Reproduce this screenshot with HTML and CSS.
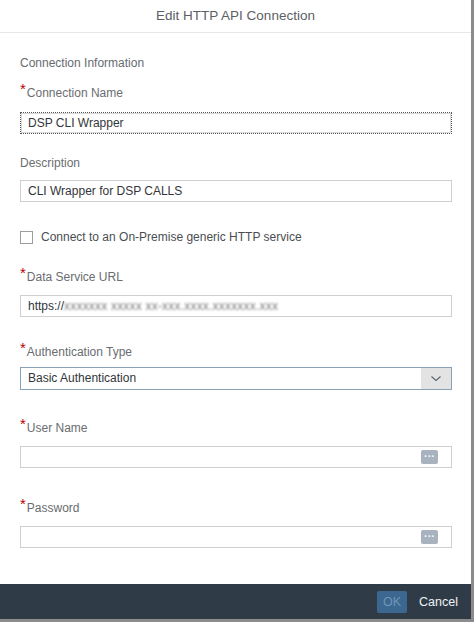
FILE: index.html
```html
<!DOCTYPE html>
<html lang="en">
  <head>
    <meta charset="UTF-8" />
    <title>Edit HTTP API Connection</title>
    <link rel="stylesheet" href="styles.css">
  </head>

  <body>
    <div id="dialog">
      <div id="header">Edit HTTP API Connection</div>

      <div id="content">
        <div class="section-title">Connection Information</div>

        <div class="field field-first">
          <label class="label"><span class="req">*</span>Connection Name</label>
          <div class="input focused">DSP CLI Wrapper</div>
        </div>

        <div class="field field-desc">
          <label class="label">Description</label>
          <div class="input">CLI Wrapper for DSP CALLS</div>
        </div>

        <div class="check-row">
          <span class="checkbox"></span>
          <span>Connect to an On-Premise generic HTTP service</span>
        </div>

        <div class="field field-url">
          <label class="label"><span class="req">*</span>Data Service URL</label>
          <div class="input">https://<span class="blurred">xxxxxxx xxxxx xx-xxx.xxxx.xxxxxxx.xxx</span></div>
        </div>

        <div class="field field-auth">
          <label class="label"><span class="req">*</span>Authentication Type</label>
          <div class="select">
            <span class="select-text">Basic Authentication</span>
            <span class="select-arrow">
              <svg width="12" height="8" viewBox="0 0 12 8">
                <path d="M1.5 1.5 L6 5.5 L10.5 1.5" fill="none" stroke="#5b6670" stroke-width="1.1" />
              </svg>
            </span>
          </div>
        </div>

        <div class="field field-user">
          <label class="label"><span class="req">*</span>User Name</label>
          <div class="input with-help"><span class="help">···</span></div>
        </div>

        <div class="field field-pass">
          <label class="label"><span class="req">*</span>Password</label>
          <div class="input with-help"><span class="help">···</span></div>
        </div>
      </div>

      <div id="footer">
        <button class="btn btn-ok">OK</button>
        <button class="btn btn-cancel">Cancel</button>
      </div>
    </div>
  </body>
</html>
```

FILE: styles.css
```css
body {
  margin: 0;
  padding: 0;
  background-color: #8c8c8c;
  font-family: "Liberation Sans", Arial, sans-serif;
  width: 474px;
  height: 622px;
  overflow: hidden;
}

#dialog {
  width: 471px;
  height: 619px;
  background-color: #fff;
  display: flex;
  flex-direction: column;
}

#header {
  height: 32px;
  line-height: 31px;
  text-align: center;
  font-size: 13.5px;
  color: #5b5f63;
  border-bottom: 1px solid #e8e8e8;
  flex-shrink: 0;
}

#content {
  flex: 1;
  padding: 22px 19px 0 20px;
  display: flex;
  flex-direction: column;
}

.section-title {
  font-size: 12px;
  line-height: 16px;
  color: #666b70;
  margin-bottom: 14px;
}

.field {
  display: flex;
  flex-direction: column;
}

.label {
  display: block;
  height: 16px;
  font-size: 12px;
  line-height: 16px;
  color: #6a6d70;
  margin-bottom: 10px;
}

.req {
  color: #bb0000;
  font-size: 15px;
  line-height: 0;
  vertical-align: 3px;
  margin-right: 1px;
}

.field-first .label { margin-bottom: 11px; }
.field-desc { margin-top: 21px; }
.field-desc .label { margin-bottom: 9px; }
.field-url { margin-top: 24px; }
.field-auth { margin-top: 27px; }
.field-auth .label { margin-bottom: 7px; }
.field-user { margin-top: 30px; }
.field-pass { margin-top: 32px; }

.input {
  height: 22px;
  box-sizing: border-box;
  border: 1px solid #cfcfcf;
  padding: 0 7px;
  font-size: 12px;
  line-height: 20px;
  color: #32363a;
  display: flex;
  align-items: center;
  white-space: nowrap;
  overflow: hidden;
}

.input.focused {
  border: 1px dotted #555;
  box-shadow: inset 0 0 0 1px #d8d8d8;
}

.blurred {
  color: #7a7a7a;
  filter: blur(1.3px);
  letter-spacing: 0.2px;
}

.with-help {
  justify-content: flex-end;
  padding-right: 13px;
}

.help {
  width: 17px;
  height: 14px;
  border-radius: 2px;
  background-color: #a9b3c0;
  color: #f4f6f8;
  font-size: 11px;
  line-height: 12px;
  text-align: center;
  font-weight: bold;
}

.check-row {
  margin-top: 27px;
  display: flex;
  align-items: center;
  font-size: 12px;
  line-height: 16px;
  color: #4a4e52;
}

.checkbox {
  width: 13px;
  height: 13px;
  box-sizing: border-box;
  border: 1px solid #9a9ea2;
  margin-right: 8px;
}

.select {
  height: 23px;
  box-sizing: border-box;
  border: 1px solid #8aa0b6;
  display: flex;
  align-items: stretch;
}

.select-text {
  flex: 1;
  padding: 0 7px;
  font-size: 12px;
  line-height: 21px;
  color: #32363a;
}

.select-arrow {
  width: 30px;
  background-color: #e3e3e3;
  display: flex;
  align-items: center;
  justify-content: center;
}

#footer {
  height: 35px;
  background-color: #2f3c48;
  display: flex;
  align-items: center;
  justify-content: flex-end;
  padding-right: 13px;
  gap: 12px;
  flex-shrink: 0;
}

.btn {
  font-family: "Liberation Sans", Arial, sans-serif;
  font-size: 12.5px;
  border: none;
  background: none;
  padding: 0;
  height: 22px;
}

.btn-ok {
  width: 30px;
  background-color: #3b6790;
  color: #7096b8;
  border-radius: 2px;
}

.btn-cancel {
  color: #eef2f6;
}
```
